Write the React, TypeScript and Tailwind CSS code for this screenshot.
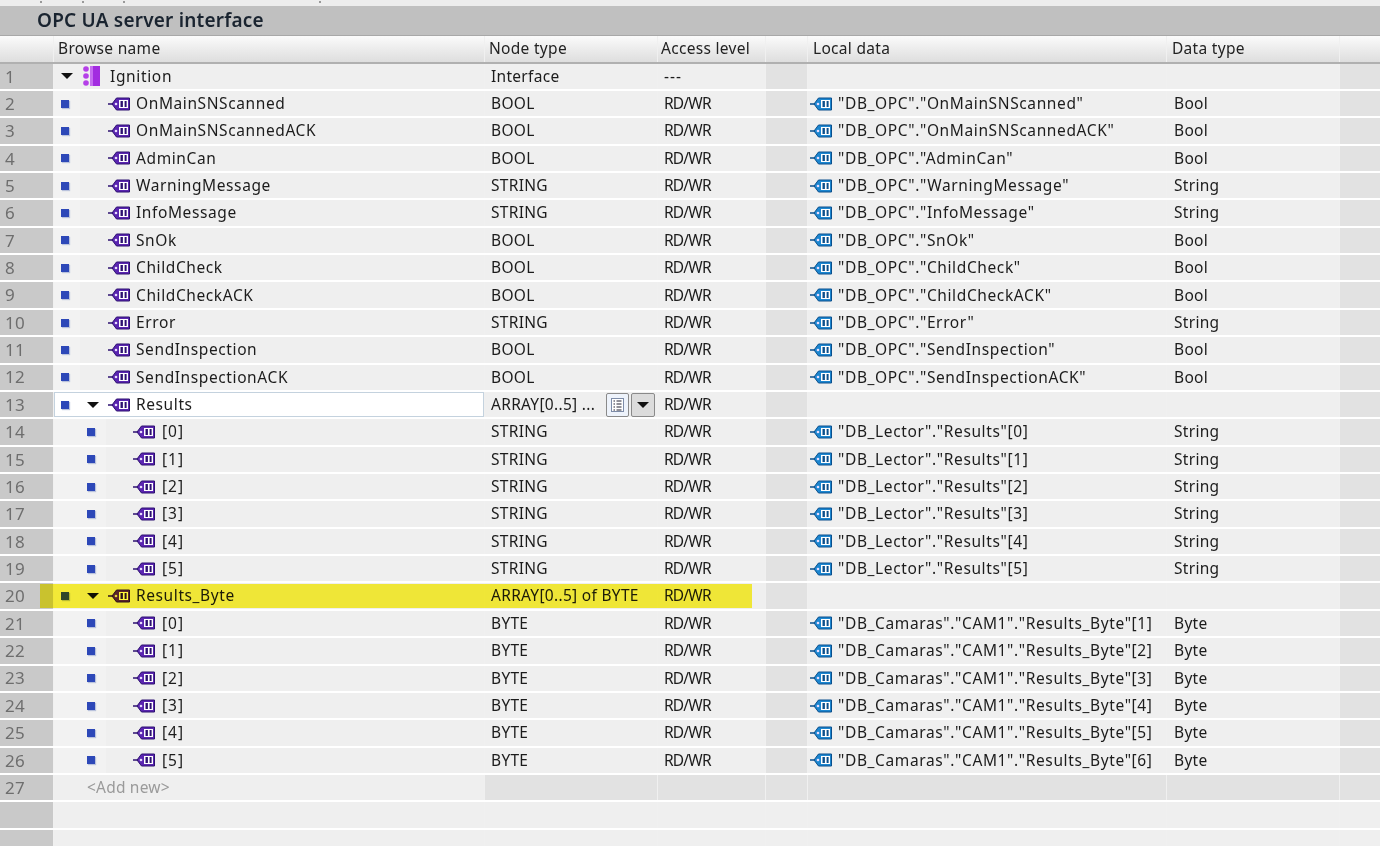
const font = "font-['Noto_Sans','Liberation_Sans',sans-serif]";

type Row = {
  name: string;
  node: string;
  access?: string;
  local?: string;
  type?: string;
  nested?: boolean;
  open?: boolean;
};

const opc = (name: string, node: string, type: string): Row => ({
  name,
  node,
  access: "RD/WR",
  local: `"DB_OPC"."${name}"`,
  type,
});

const idx = [0, 1, 2, 3, 4, 5];

const rows: Row[] = [
  opc("OnMainSNScanned", "BOOL", "Bool"),
  opc("OnMainSNScannedACK", "BOOL", "Bool"),
  opc("AdminCan", "BOOL", "Bool"),
  opc("WarningMessage", "STRING", "String"),
  opc("InfoMessage", "STRING", "String"),
  opc("SnOk", "BOOL", "Bool"),
  opc("ChildCheck", "BOOL", "Bool"),
  opc("ChildCheckACK", "BOOL", "Bool"),
  opc("Error", "STRING", "String"),
  opc("SendInspection", "BOOL", "Bool"),
  opc("SendInspectionACK", "BOOL", "Bool"),
  { name: "Results", node: "ARRAY[0..5] ...", access: "RD/WR", open: true },
  ...idx.map((i) => ({
    name: `[${i}]`,
    node: "STRING",
    access: "RD/WR",
    local: `"DB_Lector"."Results"[${i}]`,
    type: "String",
    nested: true,
  })),
  { name: "Results_Byte", node: "ARRAY[0..5] of BYTE", access: "RD/WR", open: true },
  ...idx.map((i) => ({
    name: `[${i}]`,
    node: "BYTE",
    access: "RD/WR",
    local: `"DB_Camaras"."CAM1"."Results_Byte"[${i + 1}]`,
    type: "Byte",
    nested: true,
  })),
];

const cols = "grid grid-cols-[53px_430px_172px_107px_41px_358px_172px_1fr] gap-x-px";
const rowBox = `${cols} h-[27.36px] border-b-2 border-white`;
const numCell = "bg-[#c9c9c9] pl-[5px] text-[17px] tracking-[0.4px] text-[#6e6e6e]";

function Tag({ color }: { color: "purple" | "blue" }) {
  const main = color === "purple" ? "#5a25b0" : "#1c86d0";
  const dark = color === "purple" ? "#2c1070" : "#0a4f8c";
  return (
    <svg width="22" height="14" viewBox="0 0 22 14" className="shrink-0">
      <path d="M0 7h5" stroke={dark} strokeWidth="1.5" />
      <path d="M4 7 8.5 1h13v12h-13z" fill={main} stroke={dark} strokeWidth="1" />
      <circle cx="8" cy="7" r="1.3" fill="#e8dcff" />
      <rect x="11" y="3" width="9" height="8" fill="#fff" />
      <rect x="12.5" y="4" width="2.4" height="6" fill={dark} />
      <rect x="16.6" y="4" width="2" height="6" fill={dark} />
    </svg>
  );
}

function Marker() {
  return <span className="block h-[8px] w-[8px] bg-[#2d48b8] shadow-[1px_1px_1px_#b9c2dc]" />;
}

function Triangle() {
  return (
    <svg width="12" height="6" viewBox="0 0 12 6" className="shrink-0">
      <path d="M0 0h12L6 6z" fill="#111" />
    </svg>
  );
}

function ModuleIcon() {
  return (
    <svg width="17" height="20" viewBox="0 0 17 20" className="shrink-0">
      <rect x="7" y="0" width="10" height="20" fill="#a22ce0" />
      <rect x="7" y="0" width="3" height="20" fill="#c56cf0" />
      <circle cx="3" cy="3" r="2.8" fill="#b53fe8" />
      <circle cx="3" cy="10" r="2.8" fill="#b53fe8" />
      <circle cx="3" cy="17" r="2.8" fill="#b53fe8" />
    </svg>
  );
}

function Head({ label, pad = "" }: { label?: string; pad?: string }) {
  return (
    <div
      className={`flex items-center text-[15.5px] tracking-[0.3px] text-[#222] bg-gradient-to-b from-[#fbfbfb] via-[#ececec] to-[#dedede] ${pad}`}
    >
      {label}
    </div>
  );
}

function Cell({ children, className = "" }: { children?: React.ReactNode; className?: string }) {
  return <div className={`flex items-center overflow-hidden whitespace-nowrap ${className}`}>{children}</div>;
}

function DataRow({ row, n }: { row: Row; n: number }) {
  const edit = row.name === "Results";
  return (
    <div className={rowBox}>
      <Cell className={numCell}>{n}</Cell>
      <Cell className={edit ? "bg-white shadow-[inset_0_0_0_1px_#c4d2de]" : "bg-[#efefef]"}>
        <span className={`flex h-full w-[26px] shrink-0 items-center pl-[7px] ${edit ? "" : "bg-[#f2f2f2]"}`}>
          {row.nested ? null : <Marker />}
        </span>
        {row.nested ? (
          <span className="flex h-full w-[26px] shrink-0 items-center bg-[#f2f2f2] pl-[7px]">
            <Marker />
          </span>
        ) : null}
        <span className={`flex shrink-0 items-center ${row.nested ? "w-[27px]" : "w-[28px] pl-[7px]"}`}>
          {row.open ? <Triangle /> : null}
        </span>
        <span className={`flex items-center ${row.nested ? "gap-[7px]" : "gap-[6px]"}`}>
          <Tag color="purple" />
          <span className={row.nested ? "tracking-[1px]" : "tracking-[0.6px]"}>{row.name}</span>
        </span>
      </Cell>
      <Cell className="justify-between bg-[#efefef] pl-[6px] pr-[2px] tracking-[0.3px]">
        <span>{row.node}</span>
        {edit ? (
          <span className="flex gap-[2px]">
            <span className="flex h-[24px] w-[23px] items-center justify-center rounded-[2px] border border-[#8a8a8a] bg-[#eef3fb]">
              <svg width="13" height="14" viewBox="0 0 13 14">
                <rect x="0.5" y="0.5" width="12" height="13" fill="#fff" stroke="#7d8ca8" />
                <path d="M2.5 3h1.5M5.5 3h5M2.5 6h1.5M5.5 6h5M2.5 9h1.5M5.5 9h5M2.5 12h1.5M5.5 12h5" stroke="#223" strokeWidth="1.2" />
              </svg>
            </span>
            <span className="flex h-[24px] w-[24px] items-center justify-center rounded-[2px] border border-[#8a8a8a] bg-[#dcdcdc]">
              <Triangle />
            </span>
          </span>
        ) : null}
      </Cell>
      <Cell className="bg-[#efefef] pl-[6px] tracking-[-0.8px]">{row.access}</Cell>
      <Cell className="bg-[#e2e2e2]" />
      <Cell className="gap-[6px] bg-[#efefef] pl-[2px] tracking-[0.62px]">
        {row.local ? (
          <>
            <Tag color="blue" />
            <span>{row.local}</span>
          </>
        ) : null}
      </Cell>
      <Cell className="bg-[#efefef] pl-[7px] tracking-[0.3px]">{row.type}</Cell>
      <Cell className="bg-[#e2e2e2]" />
    </div>
  );
}

function EmptyRow({ n }: { n?: number }) {
  const bg = n ? "bg-[#e2e2e2]" : "bg-[#efefef]";
  return (
    <div className={rowBox}>
      <Cell className={numCell}>{n}</Cell>
      <Cell className="bg-[#efefef] pl-[33px] tracking-[0.2px] text-[#9a9a9a]">{n ? "<Add new>" : ""}</Cell>
      <Cell className={bg} />
      <Cell className={bg} />
      <Cell className={bg} />
      <Cell className={bg} />
      <Cell className={bg} />
      <Cell className={bg} />
    </div>
  );
}

export default function App() {
  return (
    <div className={`relative h-[846px] w-[1380px] overflow-hidden bg-[#f0f0f0] text-[15.5px] text-[#1c1c1c] blur-[0.3px] ${font}`}>
      <div className="flex h-[6px] items-start bg-[#ededed] pl-[40px] pt-[1px]">
        <span className="h-[2px] w-[2px] bg-[#999]" />
        <span className="ml-[40px] h-[2px] w-[2px] bg-[#999]" />
        <span className="ml-[39px] h-[2px] w-[2px] bg-[#999]" />
        <span className="ml-[194px] h-[2px] w-[2px] bg-[#999]" />
      </div>
      <div className="flex h-[30px] items-center border-b border-[#a8a8a8] bg-[#c0c0c0] pl-[37px] text-[19px] font-semibold tracking-[0.2px] text-[#1a2430]">
        OPC UA server interface
      </div>
      <div className={`${cols} h-[27.6px] border-b-2 border-[#b0b0b0]`}>
        <Head />
        <Head label="Browse name" pad="pl-[4px]" />
        <Head label="Node type" pad="pl-[4px]" />
        <Head label="Access level" pad="pl-[3px]" />
        <Head />
        <Head label="Local data" pad="pl-[5px]" />
        <Head label="Data type" pad="pl-[5px]" />
        <Head />
      </div>
      <div className={rowBox}>
        <Cell className={numCell}>1</Cell>
        <Cell className="gap-[10px] bg-[#efefef] pl-[7px]">
          <Triangle />
          <ModuleIcon />
          <span className="tracking-[0.65px]">Ignition</span>
        </Cell>
        <Cell className="bg-[#efefef] pl-[6px] tracking-[0.3px]">Interface</Cell>
        <Cell className="bg-[#efefef] pl-[6px] tracking-[1px]">---</Cell>
        <Cell className="bg-[#e2e2e2]" />
        <Cell className="bg-[#efefef]" />
        <Cell className="bg-[#efefef]" />
        <Cell className="bg-[#e2e2e2]" />
      </div>
      {rows.map((row, i) => (
        <DataRow key={i} row={row} n={i + 2} />
      ))}
      <EmptyRow n={27} />
      <EmptyRow />
      <EmptyRow />
      <div className="pointer-events-none absolute left-[40px] top-[584px] h-[24px] w-[712px] bg-[#fff63a] mix-blend-multiply" />
    </div>
  );
}
